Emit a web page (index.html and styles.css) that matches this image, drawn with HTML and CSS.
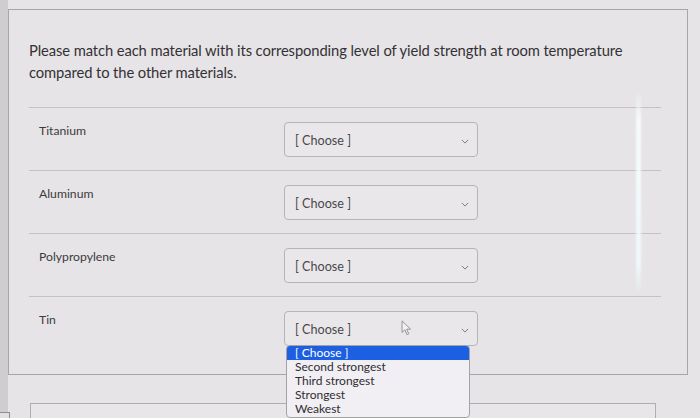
FILE: index.html
```html
<!DOCTYPE html>
<html lang="en">
<head>
<meta charset="utf-8">
<title>Matching question</title>
<link rel="stylesheet" href="styles.css">
</head>
<body>
<div class="page">
  <div class="card">
    <p class="question">Please match each material with its corresponding level of yield strength at room temperature compared to the other materials.</p>
    <div class="rows">
      <div class="row">
        <div class="label">Titanium</div>
        <div class="select"><span>[ Choose ]</span><svg class="chev" viewBox="0 0 10 6" width="8" height="5"><path d="M1 1 L5 5 L9 1" fill="none" stroke="#7a787c" stroke-width="1.2"/></svg></div>
      </div>
      <div class="row">
        <div class="label">Aluminum</div>
        <div class="select"><span>[ Choose ]</span><svg class="chev" viewBox="0 0 10 6" width="8" height="5"><path d="M1 1 L5 5 L9 1" fill="none" stroke="#7a787c" stroke-width="1.2"/></svg></div>
      </div>
      <div class="row">
        <div class="label">Polypropylene</div>
        <div class="select"><span>[ Choose ]</span><svg class="chev" viewBox="0 0 10 6" width="8" height="5"><path d="M1 1 L5 5 L9 1" fill="none" stroke="#7a787c" stroke-width="1.2"/></svg></div>
      </div>
      <div class="row last">
        <div class="label">Tin</div>
        <div class="select open"><span>[ Choose ]</span><svg class="chev" viewBox="0 0 10 6" width="8" height="5"><path d="M1 1 L5 5 L9 1" fill="none" stroke="#7a787c" stroke-width="1.2"/></svg>
          <svg class="cursor" viewBox="0 0 12 18" width="11" height="16"><path d="M1 1 L1 14 L4.2 11 L6.5 16.5 L8.5 15.6 L6.2 10.3 L10.5 10.3 Z" fill="#f2f0f2" stroke="#8a888c" stroke-width="1"/></svg>
          <ul class="options">
            <li class="sel">[ Choose ]</li>
            <li>Second strongest</li>
            <li>Third strongest</li>
            <li>Strongest</li>
            <li>Weakest</li>
          </ul>
        </div>
      </div>
    </div>
  </div>
  <div class="next">
    <div class="check"></div>
    <div class="card2"></div>
  </div>
  <div class="glare"></div>
</div>
</body>
</html>
```
FILE: styles.css
```css
* { box-sizing: border-box; }
html, body { margin: 0; padding: 0; }
body {
  width: 700px;
  height: 418px;
  overflow: hidden;
  background: #dedcde;
  font-family: Lato, "Open Sans", "Liberation Sans", sans-serif;
  color: #3a383c;
}
.page {
  position: relative;
  height: 418px;
  padding: 9px 12px 0 8px;
  background: linear-gradient(to right, #cfcdcf 0, #cfcdcf 8px, #e6e4e6 8px);
}
.card {
  height: 366px;
  border: 1px solid #a7a5a8;
  background: #e6e4e6;
  padding: 0 26px 0 20px;
}
.question {
  margin: 29px 0 0 0;
  font-size: 14.75px;
  line-height: 22px;
  color: #333135;
  letter-spacing: -0.1px;
}
.rows {
  margin-top: 24px;
  border-top: 1px solid #c4c2c5;
}
.row {
  display: flex;
  align-items: flex-start;
  height: 63px;
  border-bottom: 1px solid #c4c2c5;
}
.row.last { border-bottom: none; }
.label {
  width: 255px;
  padding: 14px 0 0 10px;
  font-size: 12.2px;
  line-height: 18px;
  color: #3c3a3e;
}
.select {
  position: relative;
  margin-top: 14px;
  width: 194px;
  height: 35px;
  border: 1px solid #b6b4b7;
  border-radius: 4px;
  background: #e9e7e9;
  display: flex;
  align-items: center;
  justify-content: space-between;
  padding: 0 8px 0 10px;
  font-size: 12.6px;
  color: #4a484c;
}
.select span { padding-top: 1px; }
.chev { margin-top: 3px; }
.cursor {
  position: absolute;
  left: 116px;
  top: 8px;
}
.options {
  position: absolute;
  left: 1px;
  top: 33px;
  width: 184px;
  margin: 0;
  padding: 0 0 1px 0;
  list-style: none;
  background: #f1eff3;
  border: 1px solid #a4a2a6;
  border-radius: 4px;
  z-index: 2;
}
.options li {
  font-size: 12px;
  line-height: 14px;
  padding-left: 8px;
  color: #2f2d31;
}
.options li.sel {
  background: #1d5fe2;
  color: #ffffff;
  border-radius: 3px 3px 0 0;
}
.next {
  display: flex;
  align-items: flex-start;
  margin-top: 28px;
  margin-left: -8px;
}
.check {
  width: 10px;
  height: 10px;
  margin-top: 9px;
  border: 1px solid #8f8d91;
  border-left: none;
  background: #e2e0e2;
}
.card2 {
  margin-left: 20px;
  width: 626px;
  height: 30px;
  border: 1px solid #b0aeb1;
  border-bottom: none;
  background: #e8e6e8;
}
.glare {
  position: absolute;
  left: 636px;
  top: 90px;
  width: 5px;
  height: 205px;
  border-radius: 3px;
  background: linear-gradient(to bottom, rgba(255,255,255,0), rgba(250,255,255,0.85) 15%, rgba(240,252,255,0.85) 85%, rgba(255,255,255,0));
  filter: blur(1px);
}
```
